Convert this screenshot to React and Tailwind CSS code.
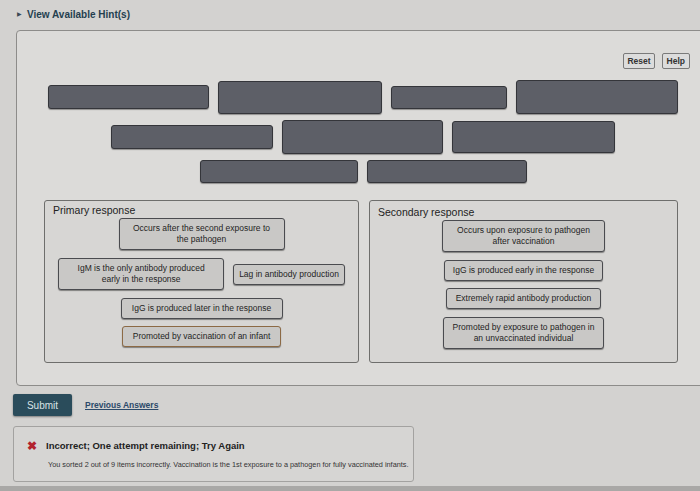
import React from 'react';

const slotRows = [
  ['w-[161px] h-[24px]', 'w-[164px] h-[33px]', 'w-[116px] h-[23px]', 'w-[162px] h-[34px]'],
  ['w-[162px] h-[24px]', 'w-[161px] h-[34px]', 'w-[163px] h-[32px]'],
  ['w-[158px] h-[23px]', 'w-[160px] h-[23px]'],
];

function Slot({ size }) {
  return (
    <div
      className={`${size} rounded-[3px] bg-[#5d5f67] border border-[#34353a] shadow-[0_1px_1px_rgba(0,0,0,0.35)]`}
    />
  );
}

function Item({ children, className = '', orange = false }) {
  return (
    <div
      className={`rounded-[3px] border ${orange ? 'border-[#8c6a45]' : 'border-[#4a4b4f]'} bg-[#c9c8c6] px-[5px] py-[4px] text-center text-[8.5px] leading-[11px] text-[#1f1f1f] shadow-[0_1px_1px_rgba(0,0,0,0.4)] ${className}`}
    >
      {children}
    </div>
  );
}

export default function App() {
  return (
    <div
      className="relative h-[491px] w-[700px] overflow-hidden bg-[#d3d2d0]"
      style={{ fontFamily: '"Liberation Sans", Arial, sans-serif' }}
    >
      <div className="flex items-center gap-[5px] pl-[17px] pt-[7px] h-[21px]">
        <span className="text-[6px] text-[#3b4a54]">▶</span>
        <span className="text-[10px] font-bold text-[#24404f]">View Available Hint(s)</span>
      </div>

      <div className="ml-[16px] mt-[9px] w-[700px] rounded-tl-[4px] rounded-bl-[4px] border border-[#8d8c8a] bg-[#dcdbd9] pb-[22px]">
        <div className="flex justify-end gap-[7px] pr-[25px] pt-[22px]">
          <button className="h-[16px] rounded-[2px] border border-[#7a7a7a] bg-[#dcdcdc] px-[3px] text-[8.5px] font-bold text-[#333]">
            Reset
          </button>
          <button className="h-[16px] rounded-[2px] border border-[#7a7a7a] bg-[#dcdcdc] px-[4px] text-[8.5px] font-bold text-[#333]">
            Help
          </button>
        </div>

        <div className="mt-[11px] flex flex-col gap-[6px] pr-[6px]">
          {slotRows.map((row, i) => (
            <div key={i} className="flex items-center justify-center gap-[9px]">
              {row.map((s, j) => (
                <Slot key={j} size={s} />
              ))}
            </div>
          ))}
        </div>

        <div className="ml-[27px] mt-[17px] flex gap-[10px]">
          <div className="h-[163px] w-[315px] rounded-[3px] border border-[#6e6e6c] bg-[#d7d6d4] px-[8px] pt-[3px]">
            <div className="text-[10.5px] leading-[13px] text-[#222]">Primary response</div>
            <div className="mt-[1px] flex flex-col items-center gap-[8px]">
              <Item className="w-[166px]">
                Occurs after the second exposure to
                <br />
                the pathogen
              </Item>
              <div className="flex items-center gap-[9px]">
                <Item className="w-[166px]">
                  IgM is the only antibody produced
                  <br />
                  early in the response
                </Item>
                <Item>Lag in antibody production</Item>
              </div>
              <Item className="w-[162px]">IgG is produced later in the response</Item>
              <Item orange className="-mt-[1px] w-[159px]">
                Promoted by vaccination of an infant
              </Item>
            </div>
          </div>

          <div className="h-[163px] w-[309px] rounded-[3px] border border-[#6e6e6c] bg-[#d7d6d4] px-[8px] pt-[5px]">
            <div className="text-[10.5px] leading-[13px] text-[#222]">Secondary response</div>
            <div className="mt-[1px] flex flex-col items-center gap-[8px]">
              <Item className="w-[163px]">
                Occurs upon exposure to pathogen
                <br />
                after vaccination
              </Item>
              <Item className="w-[159px]">IgG is produced early in the response</Item>
              <Item className="-mt-[1px] w-[155px]">Extremely rapid antibody production</Item>
              <Item className="w-[161px]">
                Promoted by exposure to pathogen in
                <br />
                an unvaccinated individual
              </Item>
            </div>
          </div>
        </div>
      </div>

      <div className="ml-[13px] mt-[8px] flex items-center gap-[13px]">
        <button className="h-[22px] w-[59px] rounded-[2px] bg-[#2a4c5b] text-[10px] text-[#d8e2e6] shadow-[0_1px_2px_rgba(0,0,0,0.4)]">
          Submit
        </button>
        <span className="text-[8.5px] font-bold text-[#2c4a6a] underline">Previous Answers</span>
      </div>

      <div className="ml-[13px] mt-[10px] h-[56px] w-[401px] rounded-[3px] border border-[#a3a2a0] bg-[#d6d5d3] px-[13px] pt-[12px]">
        <div className="flex items-center gap-[9px]">
          <span className="text-[12px] font-bold leading-[12px] text-[#b2232e]">✖</span>
          <span className="text-[9.5px] font-bold text-[#222]">Incorrect; One attempt remaining; Try Again</span>
        </div>
        <div className="mt-[7px] whitespace-nowrap pl-[21px] text-[7.3px] text-[#333]">
          You sorted 2 out of 9 items incorrectly. Vaccination is the 1st exposure to a pathogen for fully vaccinated infants.
        </div>
      </div>

      <div className="absolute bottom-0 left-0 h-[5px] w-full bg-[#a9a8a6]" />
    </div>
  );
}
